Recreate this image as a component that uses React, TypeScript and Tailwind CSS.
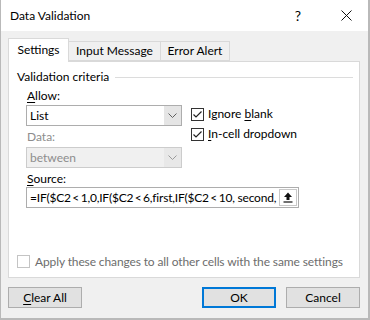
import React from 'react'

const font = { fontFamily: 'Lato, "Noto Sans", sans-serif' }

const Chevron = ({ color = '#606060' }: { color?: string }) => (
  <svg width="9" height="6" viewBox="0 0 9 6">
    <path d="M0.5 0.5 L4.5 4.5 L8.5 0.5" fill="none" stroke={color} strokeWidth="1" />
  </svg>
)

const Check = () => (
  <svg width="11" height="11" viewBox="0 0 11 11" className="absolute left-[0px] top-[0px]">
    <path d="M1.5 5.5 L4 8 L9.5 2.5" fill="none" stroke="#222" strokeWidth="1.2" />
  </svg>
)

const Combo = ({ value, disabled }: { value: string; disabled?: boolean }) => (
  <div
    className={`flex h-[21px] w-[156px] items-stretch border ${
      disabled ? 'border-[#cccccc] bg-[#f0f0f0] text-[#8d8d8d]' : 'border-[#adadad] bg-white text-black'
    }`}
  >
    <div className="flex flex-1 items-center pl-[3px]">{value}</div>
    <div className={`flex w-[17px] items-center justify-center ${disabled ? 'bg-[#e8e8e8]' : 'bg-[#e5e5e5]'}`}>
      <Chevron color={disabled ? '#9a9a9a' : '#606060'} />
    </div>
  </div>
)

const CheckBox = ({ checked, label }: { checked?: boolean; label: React.ReactNode }) => (
  <div className="flex h-[20px] items-center">
    <div className="relative h-[13px] w-[13px] border border-[#333333] bg-white">{checked && <Check />}</div>
    <span className="ml-[4px]">{label}</span>
  </div>
)

const Button = ({ children, primary }: { children: React.ReactNode; primary?: boolean }) => (
  <div
    className={`flex h-[21px] w-[74px] items-center justify-center bg-[#e1e1e1] ${
      primary ? 'border-2 border-[#0078d7]' : 'border border-[#adadad]'
    }`}
  >
    {children}
  </div>
)

// Segoe draws "<" with wide side bearings
const Lt = () => <span className="px-[1.5px]">&lt;</span>

export default function App() {
  return (
    <div
      style={font}
      className="flex h-[320px] w-[370px] flex-col border-r-2 border-b-2 border-l border-[#b9b9b9] bg-[#f0f0f0] text-[12px] leading-none text-black"
    >
      {/* title bar */}
      <div className="flex h-[31px] items-center bg-white pl-[9px]">
        <span>Data Validation</span>
        <span className="ml-auto mr-[40px] text-[14px]">?</span>
        <svg width="11" height="11" viewBox="0 0 11 11" className="mr-[16px]">
          <path d="M0.5 0.5 L10.5 10.5 M10.5 0.5 L0.5 10.5" stroke="#111" strokeWidth="1" />
        </svg>
      </div>

      <div className="flex flex-1 flex-col px-[7px] pt-[7px]">
        {/* tabs */}
        <div className="flex h-[23px] items-end">
          <div className="relative z-10 -mb-px flex h-[24px] w-[61px] items-center justify-center border border-b-0 border-[#d9d9d9] bg-white pb-[1px]">
            Settings
          </div>
          <div className="flex h-[20px] w-[92px] items-center justify-center border border-l-0 border-[#d9d9d9] bg-[#f0f0f0]">
            Input Message
          </div>
          <div className="flex h-[20px] w-[69px] items-center justify-center border border-l-0 border-[#d9d9d9] bg-[#f0f0f0]">
            Error Alert
          </div>
        </div>

        {/* panel */}
        <div className="flex h-[217px] w-[352px] flex-col border border-[#d9d9d9] bg-white pl-[8px] pr-[6px]">
          <div className="mt-[9px] flex h-[12px] items-center">
            <span>Validation criteria</span>
            <div className="ml-[6px] h-px flex-1 bg-[#dcdcdc]" />
          </div>

          <div className="flex pl-[9px]">
            <div className="flex flex-col">
              <div className="h-[22px] pt-[7px] pl-[1px]">
                <span className="underline underline-offset-2">A</span>llow:
              </div>
              <Combo value="List" />
              <div className="h-[21px] pt-[5px] pl-[1px] text-[#8d8d8d]">Data:</div>
              <Combo value="between" disabled />
            </div>
            <div className="ml-[9px] flex flex-col pt-[21px]">
              <CheckBox
                checked
                label={
                  <>
                    Ignore <span className="underline underline-offset-2">b</span>lank
                  </>
                }
              />
              <CheckBox
                checked
                label={
                  <>
                    <span className="underline underline-offset-2">I</span>n-cell dropdown
                  </>
                }
              />
            </div>
          </div>

          <div className="h-[19px] pt-[5px] pl-[10px]">
            <span className="underline underline-offset-2">S</span>ource:
          </div>
          <div className="ml-[9px] flex h-[21px] w-[273px] items-stretch border border-[#adadad] bg-white p-px">
            <div className="flex-1 overflow-hidden whitespace-nowrap pl-[2px] pt-[3px] tracking-[-0.2px]">
              =IF($C2<Lt />1,0,IF($C2<Lt />6,first,IF($C2<Lt />10, second, IF
            </div>
            <div className="flex w-[18px] items-center justify-center border border-[#c8c8c8] bg-white">
              <svg width="10" height="11" viewBox="0 0 10 11">
                <path d="M5 0.5 L9 5 L6.5 5 L6.5 8 L3.5 8 L3.5 5 L1 5 Z" fill="#111" />
                <path d="M0.5 10 L9.5 10" stroke="#111" strokeWidth="1.2" />
              </svg>
            </div>
          </div>

          <div className="mt-auto mb-[9px] flex items-center whitespace-nowrap text-[#6d6d6d]">
            <div className="h-[13px] w-[13px] border border-[#c4c4c4] bg-white" />
            <span className="ml-[5px] tracking-[-0.12px]">
              Apply these changes to all other cells with the same settings
            </span>
          </div>
        </div>

        {/* buttons */}
        <div className="mt-[9px] flex">
          <Button>
            <span>
              <span className="underline underline-offset-2">C</span>lear All
            </span>
          </Button>
          <div className="ml-auto flex gap-[10px] pr-[1px]">
            <Button primary>OK</Button>
            <Button>Cancel</Button>
          </div>
        </div>
      </div>
    </div>
  )
}
